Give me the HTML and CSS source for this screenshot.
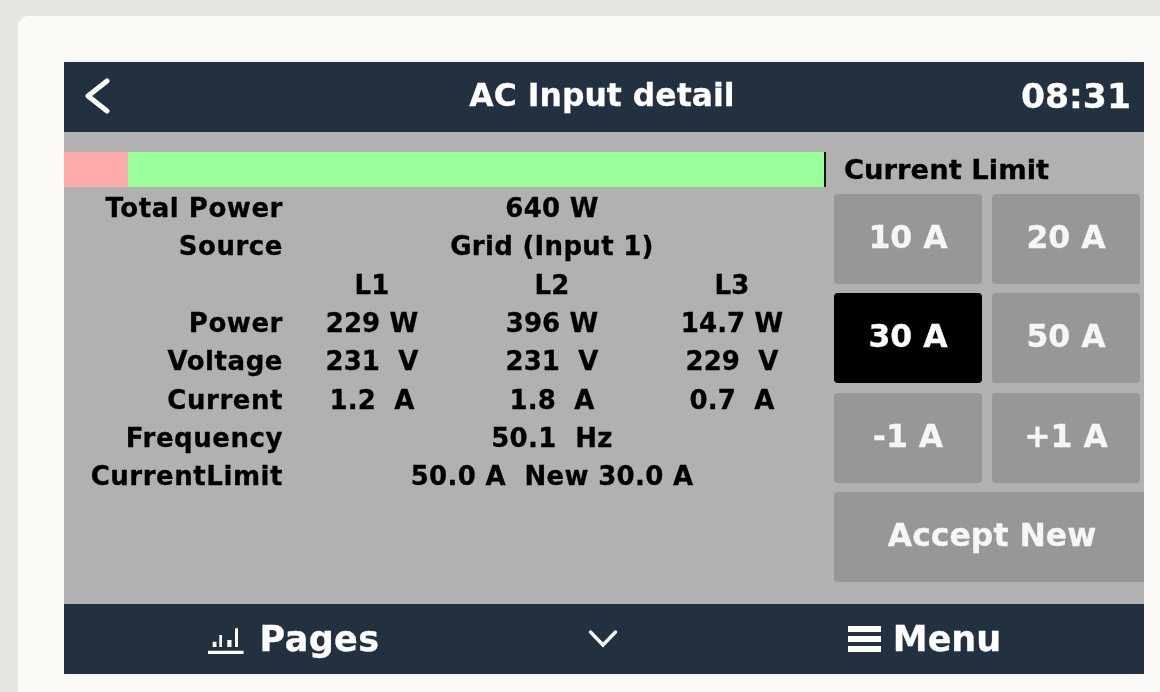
FILE: index.html
```
<!DOCTYPE html>
<html lang="en">
<head>
<meta charset="utf-8">
<title>AC Input detail</title>
<link rel="stylesheet" href="styles.css">
</head>
<body>
<main class="card">
  <div class="screen">
    <header class="topbar">
      <svg class="back" viewBox="0 0 26 36" width="26" height="36"><path d="M23 3 L4 18 L23 33"/></svg>
      <h1 class="title">AC Input detail</h1>
      <span class="clock">08:31</span>
    </header>
    <section class="content">
      <div class="left">
        <div class="bar">
          <div class="bar-red"></div>
          <div class="bar-green"></div>
        </div>
        <div class="table">
          <div class="lbl">Total Power</div><div class="wide">640 W</div>
          <div class="lbl">Source</div><div class="wide">Grid (Input 1)</div>
          <div class="lbl"></div><div class="val">L1</div><div class="val">L2</div><div class="val">L3</div>
          <div class="lbl">Power</div><div class="val">229 W</div><div class="val">396 W</div><div class="val">14.7 W</div>
          <div class="lbl">Voltage</div><div class="val">231  V</div><div class="val">231  V</div><div class="val">229  V</div>
          <div class="lbl">Current</div><div class="val">1.2  A</div><div class="val">1.8  A</div><div class="val">0.7  A</div>
          <div class="lbl">Frequency</div><div class="wide">50.1  Hz</div>
          <div class="lbl">CurrentLimit</div><div class="wide">50.0 A  New 30.0 A</div>
        </div>
      </div>
      <div class="right">
        <div class="limit-title">Current Limit</div>
        <div class="buttons">
          <div class="btn">10 A</div>
          <div class="btn">20 A</div>
          <div class="btn active">30 A</div>
          <div class="btn">50 A</div>
          <div class="btn">-1 A</div>
          <div class="btn">+1 A</div>
          <div class="btn accept">Accept New</div>
        </div>
      </div>
    </section>
    <footer class="botbar">
      <div class="foot-item pages">
        <svg class="ico-pages" viewBox="0 0 36 30" width="36" height="30"><path d="M0 26.700h35.500V30H0zM4.700 17.700h3.800V23H4.700zM11.300 11H14v12h-2.700zM19.300 16h4.200v7h-4.200zM27 4.300h3V23h-3z"/></svg>
        <span>Pages</span>
      </div>
      <svg class="chev" viewBox="0 0 30 20" width="30" height="20"><path d="M2.500 3 L15 16 L27.500 3"/></svg>
      <div class="foot-item menu">
        <svg class="ico-menu" viewBox="0 0 33 26" width="33" height="26"><path d="M0 0h33v6H0zM0 10h33v6H0zM0 20h33v6H0z"/></svg>
        <span>Menu</span>
      </div>
    </footer>
  </div>
</main>
</body>
</html>
```

FILE: styles.css
```
html, body {
  margin: 0;
  height: 100%;
}
body {
  background: #e6e5e1;
  padding: 16px 0 0 18px;
  box-sizing: border-box;
  overflow: hidden;
  font-family: "DejaVu Sans", sans-serif;
  font-weight: 700;
}
.card {
  background: #faf9f5;
  border-radius: 10px 0 0 0;
  padding: 46px 16px 30px 46px;
  height: 700px;
  box-sizing: border-box;
}
.screen {
  width: 1080px;
  height: 612px;
  background: #b1b1b1;
  display: flex;
  flex-direction: column;
  overflow: hidden;
  filter: blur(0.5px);
  -webkit-text-stroke: 0.3px currentColor;
}
.topbar {
  height: 70px;
  flex: none;
  box-sizing: border-box;
  background: #22303f;
  color: #fff;
  display: flex;
  align-items: center;
  justify-content: space-between;
  padding: 0 13px 2px 20px;
  position: relative;
}
.back {
  fill: none;
  stroke: #fff;
  stroke-width: 5;
  stroke-linecap: round;
  stroke-linejoin: round;
}
.title {
  margin: 0;
  font-size: 31.4px;
  font-weight: 700;
  line-height: 1;
  position: absolute;
  left: 0;
  right: 4px;
  text-align: center;
  letter-spacing: 0.05px;
}
.clock {
  font-size: 34.6px;
  line-height: 1;
}
.content {
  flex: 1;
  display: flex;
  padding-top: 20px;
  min-height: 0;
}
.left {
  width: 770px;
  flex: none;
}
.bar {
  width: 762px;
  height: 35px;
  display: flex;
  box-sizing: border-box;
  border-right: 2px solid #111;
}
.bar-red {
  width: 64px;
  background: #ffaaaa;
}
.bar-green {
  flex: 1;
  background: #99ff99;
}
.table {
  display: grid;
  grid-template-columns: 218px 180px 180px 180px;
  grid-auto-rows: 38.3px;
  margin-top: 2px;
  font-size: 26px;
  color: #000;
  white-space: pre;
  align-items: center;
}
.lbl {
  text-align: right;
  letter-spacing: 0.55px;
  margin-right: -1px;
}
.val {
  text-align: center;
  letter-spacing: 0.1px;
}
.wide {
  grid-column: 2 / 5;
  text-align: center;
  letter-spacing: 0.3px;
}
.right {
  flex: none;
  width: 316px;
}
.limit-title {
  height: 35px;
  line-height: 36px;
  padding-left: 10px;
  font-size: 27.4px;
  color: #000;
}
.buttons {
  display: grid;
  grid-template-columns: 148px 148px;
  column-gap: 10px;
  row-gap: 9.3px;
  grid-auto-rows: 90px;
  margin-top: 7px;
}
.btn {
  background: #979797;
  color: #f6f6f6;
  border-radius: 4px;
  font-size: 31.5px;
  display: flex;
  align-items: center;
  justify-content: center;
  padding-bottom: 4px;
  box-sizing: border-box;
}
.active {
  background: #000;
  color: #fff;
}
.accept {
  grid-column: 1 / 3;
  width: 316px;
}
.botbar {
  height: 70px;
  flex: none;
  background: #22303f;
  color: #fff;
  display: grid;
  grid-template-columns: 459px 160px 1fr;
  align-items: center;
  justify-items: center;
}
.foot-item {
  display: flex;
  align-items: center;
  font-size: 35px;
  line-height: 1;
}
.pages {
  gap: 16px;
  letter-spacing: 0.4px;
}
.menu {
  gap: 12px;
  margin-left: 22px;
}
.ico-pages, .ico-menu {
  fill: #fff;
}
.chev {
  fill: none;
  stroke: #fff;
  stroke-width: 3.4;
  stroke-linecap: round;
}
```
